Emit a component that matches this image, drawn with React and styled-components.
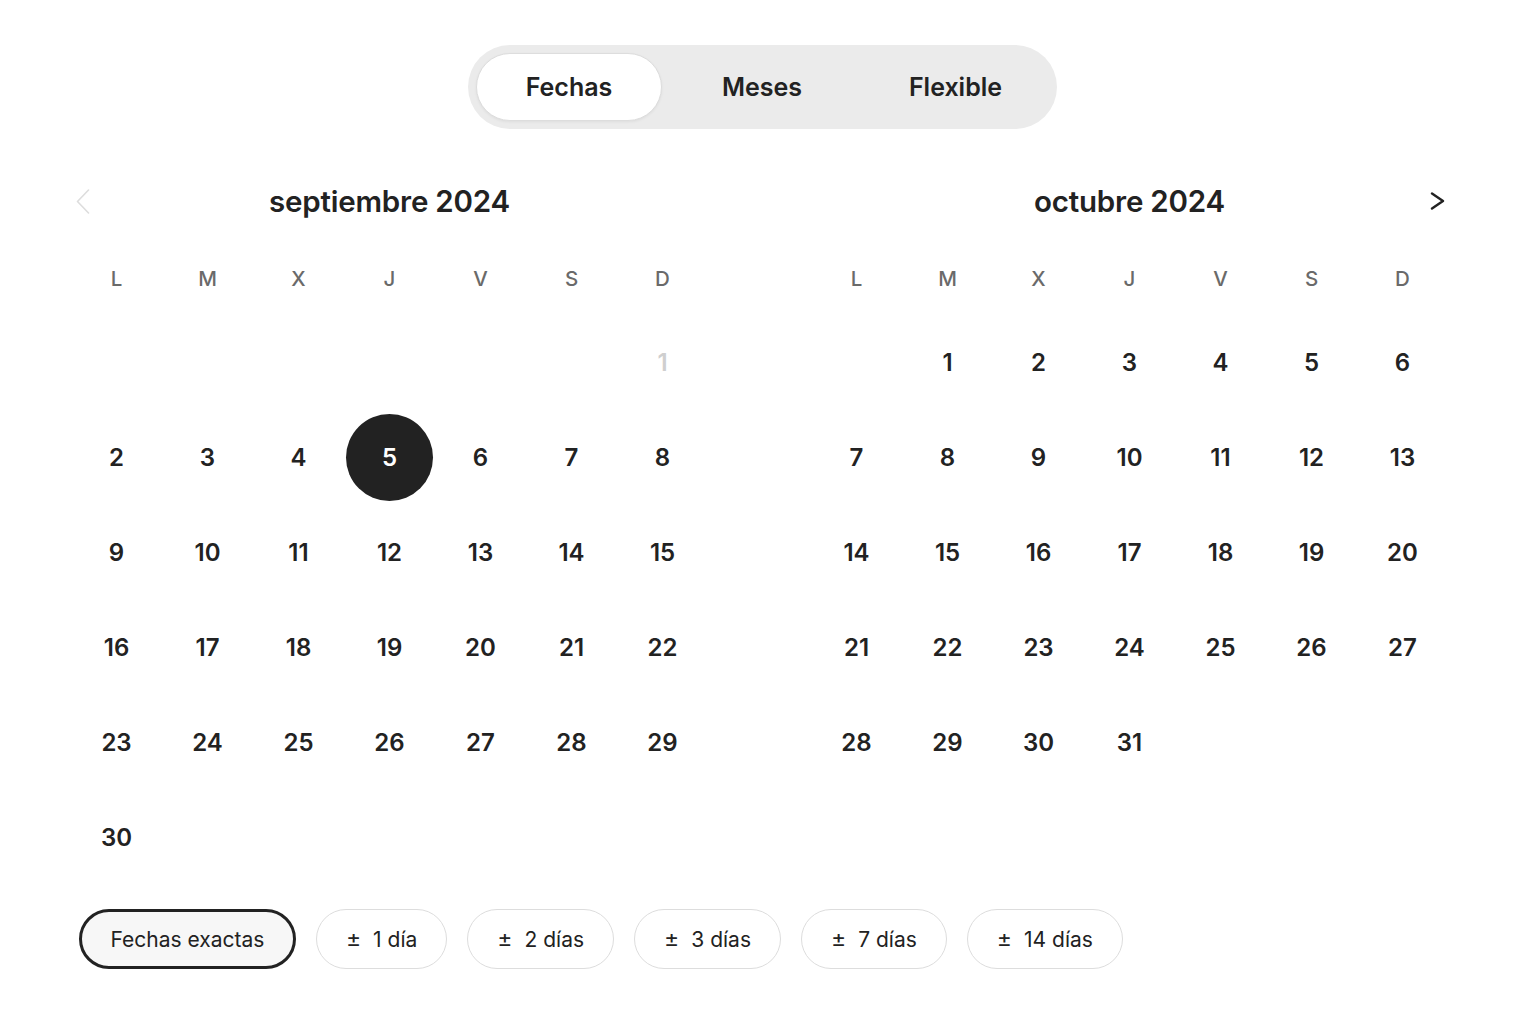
import React from "react";
import styled, { createGlobalStyle } from "styled-components";

const GlobalStyle = createGlobalStyle`
  html, body { margin: 0; padding: 0; background: #ffffff; }
  body { font-family: Inter, "Noto Sans", "Liberation Sans", sans-serif; color: #222222; }
  * { box-sizing: border-box; }
`;

const Page = styled.div`
  width: 1536px;
  min-height: 1009px;
  padding-top: 45px;
`;

const TabBar = styled.div`
  margin-left: 468px;
  width: 589px;
  height: 84px;
  padding: 8px;
  border-radius: 42px;
  background: #ebebeb;
  display: grid;
  grid-template-columns: 186px 200px 1fr;
`;

const Tab = styled.button`
  border: ${(p) => (p.$active ? "1px solid #dddddd" : "1px solid transparent")};
  background: ${(p) => (p.$active ? "#ffffff" : "transparent")};
  border-radius: 34px;
  font-family: inherit;
  font-size: 25px;
  font-weight: 600;
  color: #222222;
  box-shadow: ${(p) => (p.$active ? "0 1px 3px rgba(0,0,0,0.06)" : "none")};
  padding: 0;
`;

const Months = styled.div`
  display: flex;
  gap: 103px;
  padding-left: 71px;
  margin-top: 42px;
`;

const Month = styled.section`
  width: 637px;
`;

const MonthHeader = styled.div`
  height: 60px;
  display: grid;
  grid-template-columns: 40px 1fr 40px;
  align-items: center;
`;

const MonthTitle = styled.h2`
  margin: 0;
  text-align: center;
  font-size: 29.5px;
  font-weight: 600;
  color: #222222;
  letter-spacing: -0.2px;
`;

const NavButton = styled.button`
  border: none;
  background: transparent;
  padding: 0;
  display: flex;
  align-items: center;
  justify-self: ${(p) => (p.$side === "right" ? "end" : "start")};
  margin-left: ${(p) => (p.$side === "right" ? 0 : 5)}px;
  margin-right: ${(p) => (p.$side === "right" ? 3 : 0)}px;
`;

const WeekRow = styled.div`
  display: grid;
  grid-template-columns: repeat(7, 91px);
  height: 40px;
  margin-top: 27px;
  align-items: center;
`;

const WeekDay = styled.div`
  text-align: center;
  font-size: 20.5px;
  font-weight: 500;
  color: #6a6a6a;
`;

const DayGrid = styled.div`
  display: grid;
  grid-template-columns: repeat(7, 91px);
  grid-auto-rows: 95px;
  margin-top: 17px;
`;

const DayCell = styled.div`
  display: flex;
  align-items: center;
  justify-content: center;
`;

const Day = styled.span`
  width: 87px;
  height: 87px;
  border-radius: 50%;
  display: flex;
  align-items: center;
  justify-content: center;
  font-size: 24px;
  font-weight: 600;
  color: ${(p) => (p.$selected ? "#ffffff" : p.$disabled ? "#cfcfcf" : "#222222")};
  background: ${(p) => (p.$selected ? "#222222" : "transparent")};
`;

const Pills = styled.div`
  display: flex;
  gap: 20px;
  padding-left: 79px;
  margin-top: 24px;
`;

const Pill = styled.button`
  height: 60px;
  padding: 0 ${(p) => (p.$active ? 28.5 : 29)}px;
  border-radius: 30px;
  border: ${(p) => (p.$active ? "3px solid #222222" : "1px solid #dddddd")};
  background: ${(p) => (p.$active ? "#f7f7f7" : "#ffffff")};
  font-family: inherit;
  font-size: 21px;
  font-weight: 400;
  color: #222222;
  display: flex;
  align-items: center;
  gap: 12px;
`;

const PlusMinus = styled.span`
  font-size: 23px;
  line-height: 1;
`;

const weekdays = ["L", "M", "X", "J", "V", "S", "D"];

const ChevronLeft = () => (
  <svg width="14" height="25" viewBox="0 0 14 25" fill="none">
    <path d="M12.5 1 L1.5 12.5 L12.5 24" stroke="#dddddd" strokeWidth="1.6" strokeLinecap="round" strokeLinejoin="round" />
  </svg>
);

const ChevronRight = () => (
  <svg width="15" height="18" viewBox="0 0 15 18" fill="none">
    <path d="M2 1.5 L13 9 L2 16.5" stroke="#222222" strokeWidth="2.4" strokeLinecap="round" strokeLinejoin="round" />
  </svg>
);

function MonthCalendar({ title, offset, days, disabledUntil = 0, selected, nav }) {
  const cells = [];
  for (let i = 0; i < offset; i++) cells.push(<DayCell key={"e" + i} />);
  for (let d = 1; d <= days; d++) {
    cells.push(
      <DayCell key={d}>
        <Day $selected={d === selected} $disabled={d <= disabledUntil}>
          {d}
        </Day>
      </DayCell>
    );
  }
  return (
    <Month>
      <MonthHeader>
        {nav === "left" ? (
          <NavButton $side="left" aria-label="Mes anterior">
            <ChevronLeft />
          </NavButton>
        ) : (
          <span />
        )}
        <MonthTitle>{title}</MonthTitle>
        {nav === "right" ? (
          <NavButton $side="right" aria-label="Mes siguiente">
            <ChevronRight />
          </NavButton>
        ) : (
          <span />
        )}
      </MonthHeader>
      <WeekRow>
        {weekdays.map((w, i) => (
          <WeekDay key={i}>{w}</WeekDay>
        ))}
      </WeekRow>
      <DayGrid>{cells}</DayGrid>
    </Month>
  );
}

const flex = ["1 día", "2 días", "3 días", "7 días", "14 días"];

export default function App() {
  return (
    <Page>
      <GlobalStyle />
      <TabBar>
        <Tab $active>Fechas</Tab>
        <Tab>Meses</Tab>
        <Tab>Flexible</Tab>
      </TabBar>
      <Months>
        <MonthCalendar title="septiembre 2024" offset={6} days={30} disabledUntil={1} selected={5} nav="left" />
        <MonthCalendar title="octubre 2024" offset={1} days={31} nav="right" />
      </Months>
      <Pills>
        <Pill $active>Fechas exactas</Pill>
        {flex.map((f) => (
          <Pill key={f}>
            <PlusMinus>±</PlusMinus>
            {f}
          </Pill>
        ))}
      </Pills>
    </Page>
  );
}
